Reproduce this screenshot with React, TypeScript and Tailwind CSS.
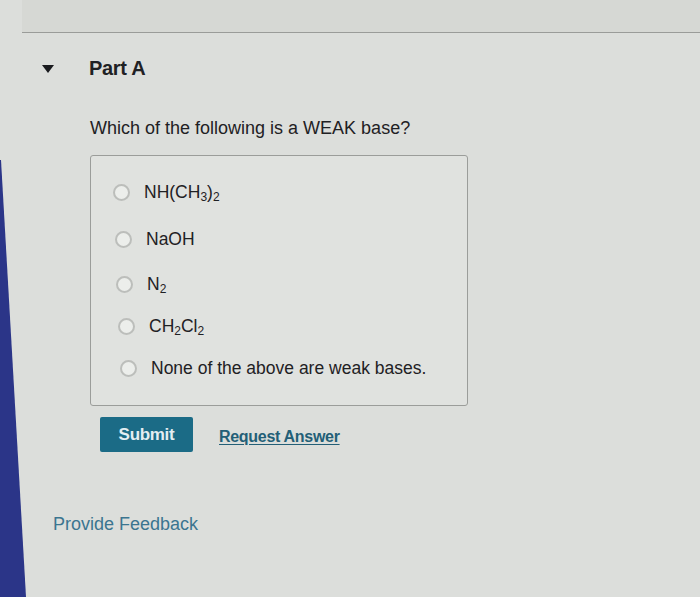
import React from 'react';

const options: React.ReactNode[] = [
  <>NH(CH<sub className="text-[12px]">3</sub>)<sub className="text-[12px]">2</sub></>,
  <>NaOH</>,
  <>N<sub className="text-[12px]">2</sub></>,
  <>CH<sub className="text-[12px]">2</sub>Cl<sub className="text-[12px]">2</sub></>,
  <>None of the above are weak bases.</>,
];

// radio x-offsets drift a little because the photo is taken at an angle
const offsets = ['ml-[22px]', 'ml-[24px]', 'ml-[25px]', 'ml-[27px]', 'ml-[29px]'];
const gaps = ['mt-[25px]', 'mt-[27px]', 'mt-[25px]', 'mt-[22px]', 'mt-[22px]'];

export default function App() {
  return (
    <div className="relative w-[700px] h-[597px] overflow-hidden bg-[#dcdedb] font-['Liberation_Sans',Arial,sans-serif] text-[#1f2124]">
      <div className="absolute left-0 top-[160px] w-[26px] h-[437px] bg-[#2b3588] [clip-path:polygon(0_0,1px_0,26px_100%,0_100%)]" />
      <div className="h-[33px] bg-[#d6d8d4] border-b border-[#9a9c99] ml-[22px]" />
      <div className="pl-[42px] pt-[20px] flex items-center">
        <svg width="12" height="8" viewBox="0 0 12 8" className="mt-[1px]">
          <polygon points="0,0 12,0 6,8" fill="#1a1b1e" />
        </svg>
        <span className="ml-[35px] text-[20px] font-bold tracking-[-0.3px]">Part A</span>
      </div>
      <div className="pl-[90px] mt-[35px] text-[18px] leading-[20px]">Which of the following is a WEAK base?</div>
      <div className="ml-[90px] mt-[17px] w-[378px] h-[251px] border border-[#9b9d9a] rounded-[3px] bg-[#e0e2df] pt-[1px]">
        {options.map((o, i) => (
          <div key={i} className={`flex items-center ${offsets[i]} ${gaps[i]} h-[20px]`}>
            <span className="w-[17px] h-[17px] rounded-full border-2 border-[#bcbebb] bg-[#eceeeb]" />
            <span className="ml-[14px] text-[17.5px] leading-[20px]">{o}</span>
          </div>
        ))}
      </div>
      <div className="ml-[100px] mt-[11px] flex items-center">
        <button className="w-[93px] h-[35px] rounded-[2px] bg-[#1b6b86] text-[#e4eef2] text-[17px] font-bold tracking-[-0.3px]">Submit</button>
        <span className="ml-[26px] mt-[4px] text-[16px] font-bold text-[#235f77] underline underline-offset-2 tracking-[-0.3px]">Request Answer</span>
      </div>
      <div className="ml-[53px] mt-[59px] text-[18px] text-[#3b7590]">Provide Feedback</div>
    </div>
  );
}
